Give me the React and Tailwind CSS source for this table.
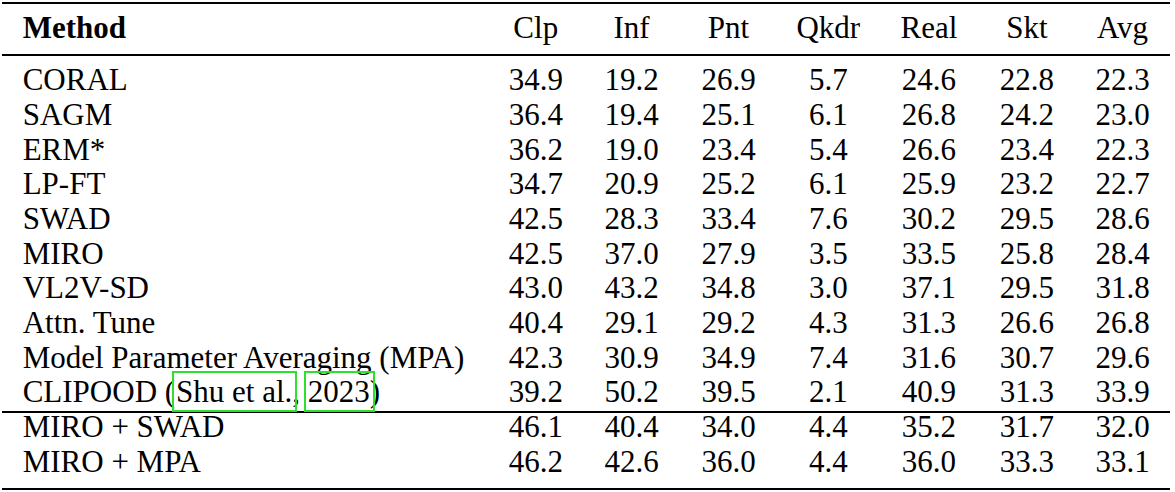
import React from "react";

const rows1 = [
  ["CORAL", "34.9", "19.2", "26.9", "5.7", "24.6", "22.8", "22.3"],
  ["SAGM", "36.4", "19.4", "25.1", "6.1", "26.8", "24.2", "23.0"],
  ["ERM*", "36.2", "19.0", "23.4", "5.4", "26.6", "23.4", "22.3"],
  ["LP-FT", "34.7", "20.9", "25.2", "6.1", "25.9", "23.2", "22.7"],
  ["SWAD", "42.5", "28.3", "33.4", "7.6", "30.2", "29.5", "28.6"],
  ["MIRO", "42.5", "37.0", "27.9", "3.5", "33.5", "25.8", "28.4"],
  ["VL2V-SD", "43.0", "43.2", "34.8", "3.0", "37.1", "29.5", "31.8"],
  ["Attn. Tune", "40.4", "29.1", "29.2", "4.3", "31.3", "26.6", "26.8"],
  ["Model Parameter Averaging (MPA)", "42.3", "30.9", "34.9", "7.4", "31.6", "30.7", "29.6"],
  ["CLIPOOD", "39.2", "50.2", "39.5", "2.1", "40.9", "31.3", "33.9"],
];

const rows2 = [
  ["MIRO + SWAD", "46.1", "40.4", "34.0", "4.4", "35.2", "31.7", "32.0"],
  ["MIRO + MPA", "46.2", "42.6", "36.0", "4.4", "36.0", "33.3", "33.1"],
];

const grid =
  "grid grid-cols-[486px_95.5px_96px_98px_101.5px_99.75px_96.25px_95px] h-[34.67px] leading-[34.67px]";

function Cite({ children, className = "" }) {
  return (
    <span className={"relative " + className}>
      {children}
      <span className="absolute top-[-3px] bottom-[-3px] left-[-4px] right-[-5px] border-[2.5px] border-[#2ee02e]" />
    </span>
  );
}

function Row({ r }) {
  return (
    <div className={grid}>
      <div className="pl-[20.7px] whitespace-nowrap">
        {r[0] === "CLIPOOD" ? (
          <>
            CLIPOOD (<Cite className="ml-[1px]">Shu et al.</Cite>, <Cite>2023</Cite>)
          </>
        ) : (
          r[0]
        )}
      </div>
      {r.slice(1).map((v, i) => (
        <div key={i} className="text-center">
          {v}
        </div>
      ))}
    </div>
  );
}

export default function App() {
  const headers = ["Clp", "Inf", "Pnt", "Qkdr", "Real", "Skt", "Avg"];
  return (
    <div
      className="w-[1175px] h-[492px] bg-white text-black text-[31px] overflow-hidden"
      style={{ fontFamily: '"Liberation Serif", "Times New Roman", serif' }}
    >
      <div className="ml-[2px] w-[1168px] flex flex-col">
        <div className="mt-[2px] h-[2px] bg-black" />
        <div className={grid + " mt-[7.3px]"}>
          <div className="pl-[20.7px] font-bold">Method</div>
          {headers.map((h) => (
            <div key={h} className="text-center">
              {h}
            </div>
          ))}
        </div>
        <div className="mt-[8.3px] h-[1.5px] bg-black" />
        <div className="mt-[7.5px]">
          {rows1.map((r) => (
            <Row key={r[0]} r={r} />
          ))}
        </div>
        <div className="mt-[1.3px] h-[1.4px] bg-black" />
        <div className="mt-[-2.4px]">
          {rows2.map((r) => (
            <Row key={r[0]} r={r} />
          ))}
        </div>
        <div className="mt-[8.4px] h-[2px] bg-black" />
      </div>
    </div>
  );
}
